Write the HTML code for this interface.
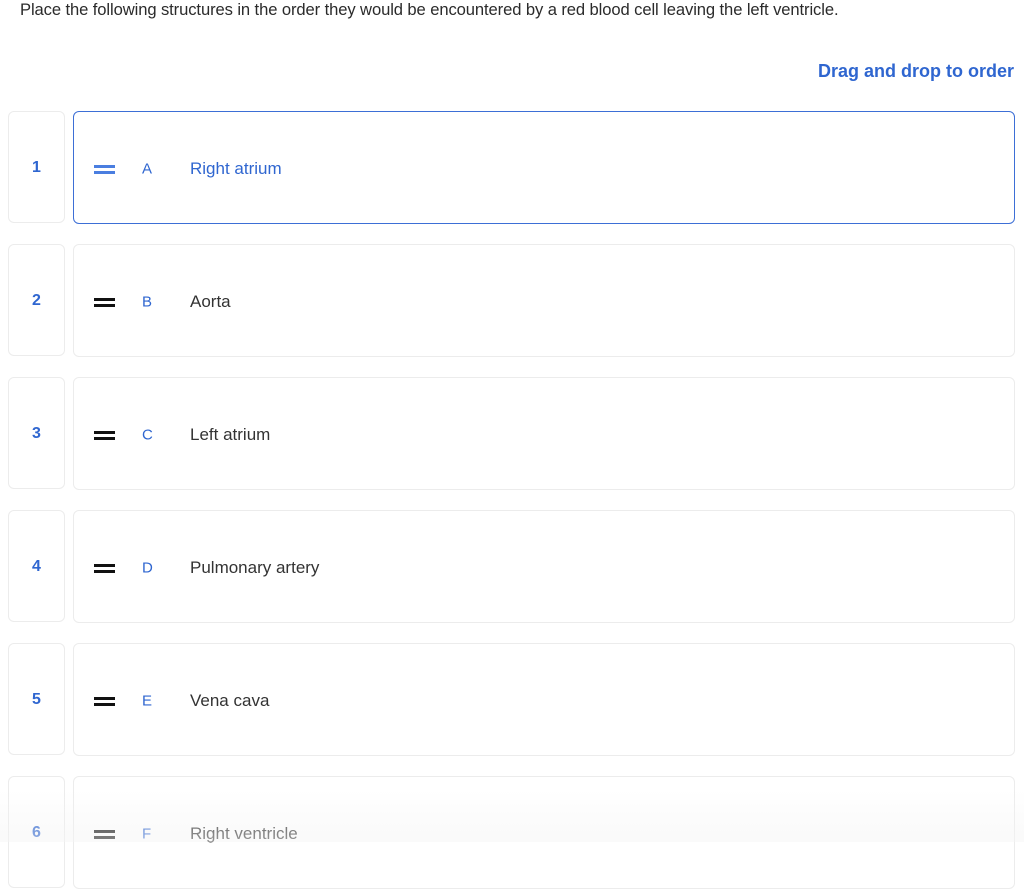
<!DOCTYPE html>
<html><head><style>
body{margin:0;width:1024px;height:842px;overflow:hidden;background:#fff;font-family:"Liberation Sans",sans-serif;position:relative}
.q{position:absolute;left:20px;top:0px;font-size:16.6px;color:#2b2b2b;letter-spacing:-0.1px}
.dd{position:absolute;right:10px;top:61px;font-size:18px;font-weight:bold;color:#2f66d0}
.n{position:absolute;left:8px;width:57px;height:112px;border:1px solid #ececec;border-radius:6px;box-sizing:border-box;display:flex;align-items:center;justify-content:center;font-weight:bold;font-size:16px;color:#2f66d0;padding-top:2px}
.b{position:absolute;left:73px;width:942px;height:113px;border:1px solid #ececec;border-radius:6px;box-sizing:border-box}
.b.s{border-color:#3d6fd6}
.h{position:absolute;left:20px;top:50%;width:21px;height:9px;margin-top:-3px;border-top:3px solid #111;border-bottom:3px solid #111;box-sizing:border-box}
.s .h{border-color:#4a7ee0}
.l{position:absolute;left:68px;top:50%;transform:translateY(-45%);font-size:15px;color:#2f66d0}
.t{position:absolute;left:116px;top:50%;transform:translateY(-45%);font-size:17px;color:#333}
.s .t{color:#2f66d0}
.fade{position:absolute;left:0;top:790px;width:1024px;height:52px;background:linear-gradient(rgba(255,255,255,0),rgba(244,244,244,0.5))}
</style></head><body>
<div class="q">Place the following structures in the order they would be encountered by a red blood cell leaving the left ventricle.</div>
<div class="dd">Drag and drop to order</div>
<div class="n" style="top:111px">1</div><div class="b s" style="top:111px"><div class="h"></div><div class="l">A</div><div class="t">Right atrium</div></div>
<div class="n" style="top:244px">2</div><div class="b" style="top:244px"><div class="h"></div><div class="l">B</div><div class="t">Aorta</div></div>
<div class="n" style="top:377px">3</div><div class="b" style="top:377px"><div class="h"></div><div class="l">C</div><div class="t">Left atrium</div></div>
<div class="n" style="top:510px">4</div><div class="b" style="top:510px"><div class="h"></div><div class="l">D</div><div class="t">Pulmonary artery</div></div>
<div class="n" style="top:643px">5</div><div class="b" style="top:643px"><div class="h"></div><div class="l">E</div><div class="t">Vena cava</div></div>
<div class="n" style="top:776px">6</div><div class="b" style="top:776px"><div class="h"></div><div class="l">F</div><div class="t">Right ventricle</div></div>
<div class="fade"></div>
</body></html>
